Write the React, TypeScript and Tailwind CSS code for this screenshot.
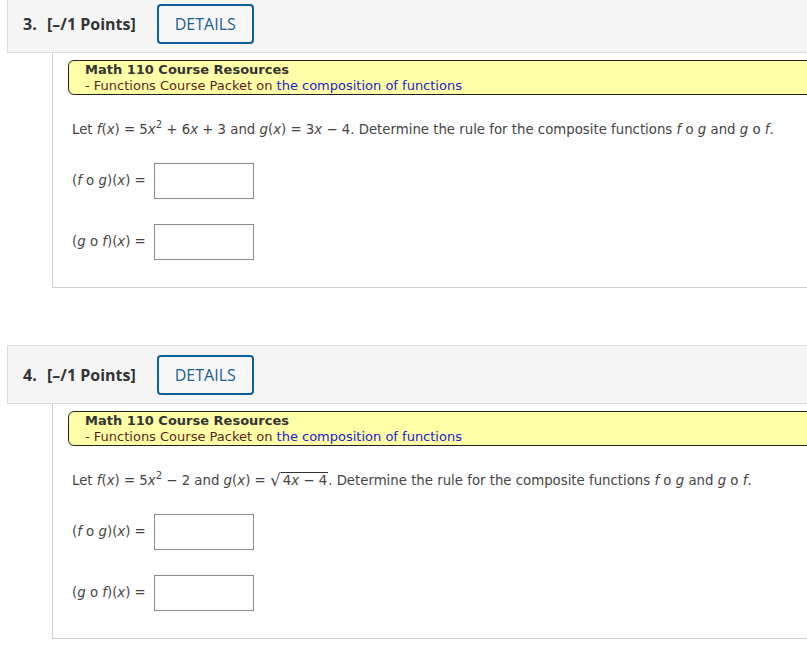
import React from "react";

const verdana = { fontFamily: '"DejaVu Sans", Verdana, sans-serif' };

function I({ children }: { children: React.ReactNode }) {
  return <i>{children}</i>;
}

function Sup2() {
  return (
    <span className="text-[10px] relative -top-[6px] leading-[0]">2</span>
  );
}

function Input({ label }: { label: React.ReactNode }) {
  return (
    <div className="flex items-center h-[36px]">
      <span className="text-[13.3px] text-[#444] mr-[8px]" style={verdana}>
        {label}
      </span>
      <div className="w-[100px] h-[36px] border border-[#8a8a8a] bg-white" />
    </div>
  );
}

function Question({
  num,
  text,
  first,
}: {
  num: string;
  text: React.ReactNode;
  first?: boolean;
}) {
  return (
    <div className={first ? "-mt-[6px]" : "mt-[57px]"}>
      <div className="ml-[7px] h-[59px] border border-r-0 border-[#dcdcdc] bg-[#f5f5f5] flex items-center pl-[15px]">
        <span
          className="text-[16px] font-bold text-[#333] w-[24px]"
          style={{ fontFamily: '"Open Sans", sans-serif' }}
        >
          {num}.
        </span>
        <span
          className="text-[16px] font-bold text-[#333]"
          style={{ fontFamily: '"Open Sans", sans-serif' }}
        >
          [–/1 Points]
        </span>
        <div
          className="ml-[21px] w-[97px] h-[40px] border-2 border-[#0b5f9a] rounded-[4px] flex items-center justify-center text-[16px] text-[#1b5d94] bg-[#f7f7f7]"
          style={{ fontFamily: '"Open Sans", sans-serif' }}
        >
          DETAILS
        </div>
      </div>
      <div className="ml-[52px] border-l border-b border-[#cfcfcf] pt-[7px] pb-[27px] pl-[15px]">
        <div
          className="-mr-[20px] h-[35px] bg-[#ffffa8] border border-[#222] rounded-l-[6px] pl-[16px] pt-[1px] text-[13px] leading-[16px]"
          style={verdana}
        >
          <div className="font-bold text-[#333]">Math 110 Course Resources</div>
          <div className="text-[#5a1f1f]">
            - Functions Course Packet on{" "}
            <span className="text-[#2222cc]">the composition of functions</span>
          </div>
        </div>
        <div
          className="mt-[26px] mb-[-1px] pl-[4px] h-[18px] leading-[18px] text-[13.3px] text-[#444] whitespace-nowrap"
          style={verdana}
        >
          {text}
        </div>
        <div className="mt-[25px] pl-[4px] flex flex-col gap-[25px]">
          <Input
            label={
              <>
                (<I>f</I> o <I>g</I>)(<I>x</I>) =
              </>
            }
          />
          <Input
            label={
              <>
                (<I>g</I> o <I>f</I>)(<I>x</I>) =
              </>
            }
          />
        </div>
      </div>
    </div>
  );
}

export default function App() {
  return (
    <div className="w-[807px] h-[650px] overflow-hidden bg-white">
      <Question
        first
        num="3"
        text={
          <>
            Let <I>f</I>(<I>x</I>) = 5<I>x</I>
            <Sup2 /> + 6<I>x</I> + 3 and <I>g</I>(<I>x</I>) = 3<I>x</I> − 4.
            Determine the rule for the composite functions <I>f</I> o <I>g</I>{" "}
            and <I>g</I> o <I>f</I>.
          </>
        }
      />
      <Question
        num="4"
        text={
          <>
            Let <I>f</I>(<I>x</I>) = 5<I>x</I>
            <Sup2 /> − 2 and <I>g</I>(<I>x</I>) ={" "}
            <span className="inline-flex items-start align-top">
              <span className="text-[17px] leading-[19px] -mt-[1px]">√</span>
              <span className="border-t border-[#333] leading-[16px] mt-[0px] pl-[2px] pr-[1px]">
                4<I>x</I> − 4
              </span>
            </span>
            . Determine the rule for the composite functions <I>f</I> o{" "}
            <I>g</I> and <I>g</I> o <I>f</I>.
          </>
        }
      />
    </div>
  );
}
